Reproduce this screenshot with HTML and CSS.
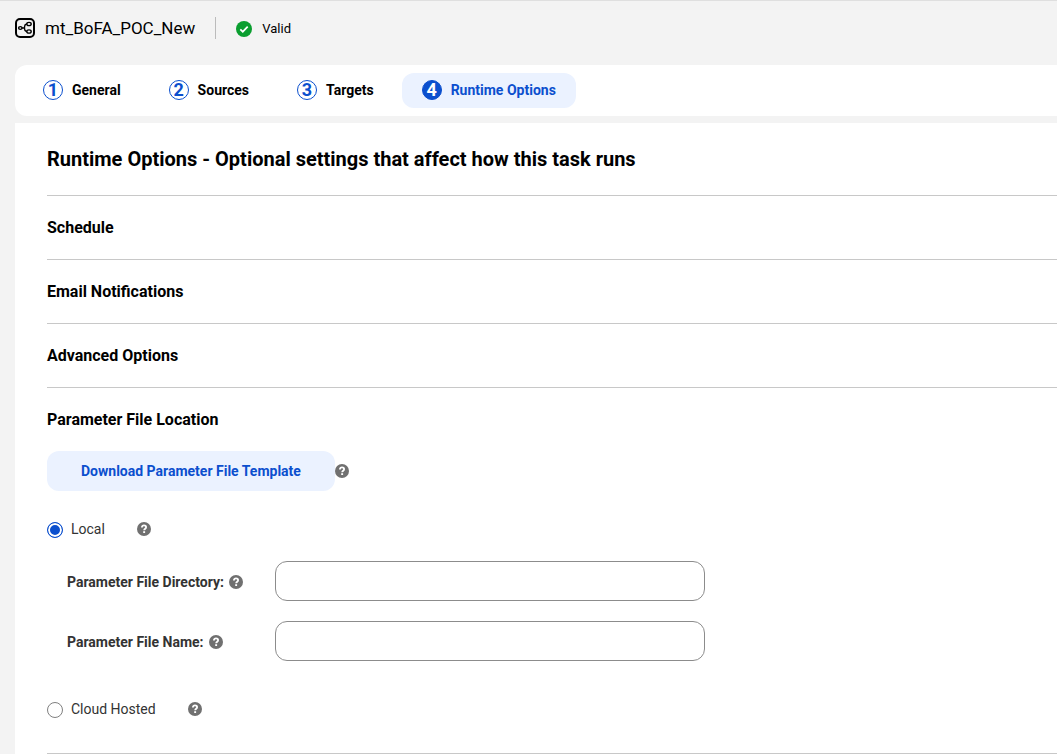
FILE: index.html
```html
<!DOCTYPE html>
<html lang="en">
<head>
<meta charset="utf-8">
<meta name="viewport" content="width=device-width, initial-scale=1">
<title>mt_BoFA_POC_New</title>
<link rel="stylesheet" href="styles.css">
</head>
<body>
<svg class="sprite" aria-hidden="true">
  <symbol id="help" viewBox="0 0 14 14">
    <circle cx="7" cy="7" r="7" fill="#707070"/>
    <path d="M4.9 5.400C4.900 4.100 5.800 3.400 7 3.400s2.100.7 2.100 1.800c0 1.500-1.900 1.500-1.900 3" fill="none" stroke="#fff" stroke-width="1.800"/>
    <rect x="6.200" y="9.200" width="1.900" height="1.800" fill="#fff"/>
  </symbol>
</svg>
<header class="header">
  <svg class="header-icon" viewBox="0 0 20 20" fill="none" stroke="#000" aria-hidden="true">
    <rect x="1" y="1" width="18" height="18" rx="4" stroke-width="2"/>
    <g stroke-width="1.4">
      <ellipse cx="5.300" cy="10" rx="1.700" ry="1.400"/>
      <ellipse cx="14" cy="6" rx="2.200" ry="1.600"/>
      <ellipse cx="14" cy="13.500" rx="2.200" ry="1.600"/>
      <path d="M7 10h2.400M11.800 6H11.500Q9.500 6.500 9.500 9v1.500Q9.500 13 11.500 13.500h.3"/>
    </g>
  </svg>
  <h1 class="task-name">mt_BoFA_POC_New</h1>
  <div class="status">
    <svg class="status-icon" viewBox="0 0 16 16" aria-hidden="true">
      <circle cx="8" cy="8" r="8" fill="#0a9e2f"/>
      <path d="M4.300 8.300l2.500 2.400 4.900-5" fill="none" stroke="#fff" stroke-width="1.700"/>
    </svg>
    <span>Valid</span>
  </div>
</header>
<nav class="steps" aria-label="Steps">
  <button class="step" type="button"><span class="step-number">1</span>General</button>
  <button class="step" type="button"><span class="step-number">2</span>Sources</button>
  <button class="step" type="button"><span class="step-number">3</span>Targets</button>
  <button class="step step-active" type="button" aria-current="step"><span class="step-number">4</span>Runtime Options</button>
</nav>
<main class="content">
  <h2 class="page-title">Runtime Options - Optional settings that affect how this task runs</h2>
  <section class="section"><h3 class="section-title">Schedule</h3></section>
  <section class="section"><h3 class="section-title">Email Notifications</h3></section>
  <section class="section"><h3 class="section-title">Advanced Options</h3></section>
  <section class="section section-last">
    <h3 class="section-title">Parameter File Location</h3>
    <div class="download">
      <button class="download-button" type="button">Download Parameter File Template</button>
      <svg class="help" role="img" aria-label="Help"><use href="#help"/></svg>
    </div>
    <div class="choice">
      <input class="radio" type="radio" name="location" id="local" checked>
      <label class="choice-label" for="local">Local</label>
      <svg class="help" role="img" aria-label="Help"><use href="#help"/></svg>
    </div>
    <div class="fields">
      <div class="field-label">
        <label for="directory">Parameter File Directory:</label>
        <svg class="help" role="img" aria-label="Help"><use href="#help"/></svg>
      </div>
      <input class="text-box" type="text" id="directory">
      <div class="field-label">
        <label for="filename">Parameter File Name:</label>
        <svg class="help" role="img" aria-label="Help"><use href="#help"/></svg>
      </div>
      <input class="text-box" type="text" id="filename">
    </div>
    <div class="choice">
      <input class="radio" type="radio" name="location" id="cloud">
      <label class="choice-label" for="cloud">Cloud Hosted</label>
      <svg class="help" role="img" aria-label="Help"><use href="#help"/></svg>
    </div>
  </section>
</main>
</body>
</html>
```
FILE: styles.css
```css
* {
  box-sizing: border-box;
}

body {
  margin: 0;
  background: #f3f3f3;
  color: #000;
  font: 14px/20px Roboto, "Liberation Sans", sans-serif;
}

h1, h2, h3 {
  margin: 0;
}

button {
  border: 0;
  font: inherit;
  font-weight: 700;
  cursor: pointer;
}

.sprite {
  display: none;
}

.header {
  display: flex;
  align-items: center;
  padding: 16px 15px 26px;
  border-top: 1px solid #dfdfdf;
}

.header-icon {
  width: 20px;
  height: 20px;
  margin-right: 10px;
}

.task-name {
  font-size: 17px;
  line-height: 22px;
  font-weight: 400;
}

.status {
  display: flex;
  align-items: center;
  gap: 10px;
  margin-left: 20px;
  padding: 2px 0 0 20px;
  border-left: 1px solid #bbb;
  font-size: 13px;
  line-height: 20px;
}

.status-icon {
  width: 16px;
  height: 16px;
}

.steps {
  display: flex;
  gap: 8px;
  margin-left: 15px;
  padding: 8px;
  border-radius: 12px 0 0 12px;
  background: #fff;
}

.step {
  display: flex;
  align-items: center;
  gap: 9px;
  height: 35px;
  padding: 0 20px 1px;
  border-radius: 12px;
  background: none;
  color: #000;
}

.step-number {
  display: flex;
  align-items: center;
  justify-content: center;
  width: 20px;
  height: 20px;
  border: 1px solid #0b4fce;
  border-radius: 50%;
  color: #0b4fce;
  font-size: 18px;
  line-height: 18px;
}

.step-active {
  background: #ebf2ff;
  color: #0b4fce;
}

.step-active .step-number {
  background: #0b4fce;
  color: #fff;
}

.content {
  margin: 7px 0 0 15px;
  padding-left: 32px;
  background: #fff;
}

.page-title {
  padding: 24px 0;
  font-size: 20px;
  line-height: 24px;
  font-weight: 700;
}

.section {
  border-top: 1px solid #c8c8c8;
}

.section-title {
  padding: 20px 0 19px;
  font-size: 16px;
  line-height: 24px;
  font-weight: 700;
}

.section-last {
  padding-bottom: 34px;
  border-bottom: 1px solid #c8c8c8;
}

.download {
  display: flex;
  align-items: center;
}

.download-button {
  height: 40px;
  padding: 0 34px;
  border-radius: 12px;
  background: #ebf2ff;
  color: #0b4fce;
}

.help {
  flex: none;
  width: 14px;
  height: 14px;
}

.choice {
  display: flex;
  align-items: center;
  margin-top: 28px;
  color: #333;
}

.choice-label {
  margin: 0 32px 0 8px;
}

.radio {
  appearance: none;
  width: 16px;
  height: 16px;
  margin: 2px 0 0;
  border: 1px solid #808080;
  border-radius: 50%;
  background: #fff;
}

.radio:checked {
  border-color: #0b4fce;
  background: #0b4fce;
  box-shadow: inset 0 0 0 2px #fff;
}

.fields {
  display: grid;
  grid-template-columns: 208px 430px;
  gap: 20px 0;
  margin-top: 22px;
  padding-left: 20px;
}

.field-label {
  display: flex;
  align-items: center;
  gap: 5px;
  padding-top: 2px;
  color: #333;
  font-weight: 700;
}

.text-box {
  width: 100%;
  height: 40px;
  padding: 0 12px;
  border: 1px solid #8c8c8c;
  border-radius: 12px;
  background: #fff;
  font: inherit;
}

.fields + .choice {
  margin-top: 38px;
}
```
